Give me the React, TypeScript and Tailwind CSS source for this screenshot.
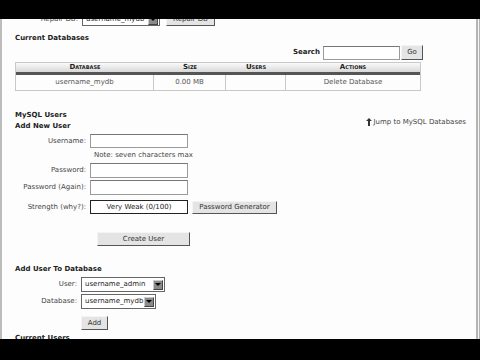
import React from "react";

const Btn = ({ children, className = "" }: { children: React.ReactNode; className?: string }) => (
  <div
    className={`flex items-center justify-center bg-[#e4e4e4] border border-t-[#f4f4f4] border-l-[#f4f4f4] border-b-[#555] border-r-[#555] text-[#333] ${className}`}
  >
    {children}
  </div>
);

const Input = ({ className = "" }: { className?: string }) => (
  <div className={`bg-white border border-[#9a9a9a] border-t-[#777] ${className}`} />
);

const Select = ({ value, className = "" }: { value: string; className?: string }) => (
  <div className={`flex items-center bg-white border border-[#666] p-px ${className}`}>
    <span className="flex-1 pl-[2px] text-[#222] whitespace-nowrap overflow-hidden">{value}</span>
    <span className="w-[10px] h-[10px] flex items-center justify-center bg-[#8a8a8a] border border-[#ccc] border-r-[#444] border-b-[#444]">
      <span className="w-0 h-0 border-l-[3px] border-r-[3px] border-t-[3px] border-l-transparent border-r-transparent border-t-black" />
    </span>
  </div>
);

const Row = ({ label, children, lw = "w-[88px]" }: { label: string; children: React.ReactNode; lw?: string }) => (
  <div className="flex items-center">
    <div className={`${lw} pr-[4px] text-right text-[#444]`}>{label}</div>
    {children}
  </div>
);

export default function App() {
  return (
    <div className="w-[480px] h-[360px] bg-black flex flex-col font-['DejaVu_Sans',sans-serif] text-[7px] leading-none">
      <div className="h-[19px] shrink-0" />
      <div className="h-[320px] shrink-0 bg-[#fdfdfd] border-l-2 border-[#bdbdbd] overflow-hidden flex">
        <div className="flex-1 flex flex-col">
          {/* repair row, cut off by the top bar */}
          <div className="flex items-center -mt-[6px] h-[14px]">
            <div className="w-[78px] pr-[2px] text-right text-[#444]">Repair DB:</div>
            <Select value="username_mydb" className="w-[78px] h-[13px] ml-[2px]" />
            <Btn className="w-[49px] h-[13px] ml-[6px]">Repair DB</Btn>
          </div>

          <div className="mt-[9px] ml-[13px] font-bold text-[#222]">Current Databases</div>

          <div className="flex items-center justify-end mr-[53px] mt-[3px] h-[16px]">
            <span className="font-bold text-[#222] mr-[3px]">Search</span>
            <Input className="w-[77px] h-[14px]" />
            <Btn className="w-[22px] h-[15px] ml-px">Go</Btn>
          </div>

          {/* table */}
          <div className="ml-[13px] w-[406px] mt-[2px] border border-[#c8c8c8]">
            <div className="grid grid-cols-[138px_72px_60px_1fr] h-[12px] bg-gradient-to-b from-[#fafafa] to-[#d8d8d8] border-b-[3px] border-[#555] font-bold text-[#222] [font-variant:small-caps]">
              <div className="flex items-end justify-center pb-px">Database</div>
              <div className="flex items-end justify-center pb-px">Size</div>
              <div className="flex items-end justify-center pb-px">Users</div>
              <div className="flex items-end justify-center pb-px">Actions</div>
            </div>
            <div className="grid grid-cols-[138px_72px_60px_1fr] h-[15px] text-[#555]">
              <div className="flex items-center justify-center border-r border-[#c8c8c8]">username_mydb</div>
              <div className="flex items-center justify-center border-r border-[#c8c8c8]">0.00 MB</div>
              <div className="flex items-center justify-center border-r border-[#c8c8c8]" />
              <div className="flex items-center justify-center">Delete Database</div>
            </div>
          </div>

          <div className="mt-[21px] ml-[13px] font-bold text-[#222]">MySQL Users</div>
          <div className="flex justify-end mr-[10px] -mt-[1px] items-center text-[#444]">
            <svg width="6" height="8" viewBox="0 0 6 8" className="mr-px">
              <path d="M3 0 L6 3 L4 3 L4 8 L2 8 L2 3 L0 3 Z" fill="#333" />
            </svg>
            Jump to MySQL Databases
          </div>
          <div className="-mt-[3px] ml-[13px] font-bold text-[#222]">Add New User</div>

          <div className="mt-[4px] flex flex-col">
            <Row label="Username:">
              <Input className="w-[98px] h-[14px]" />
            </Row>
            <div className="ml-[92px] mt-[4px] text-[#444]">Note: seven characters max</div>
            <div className="mt-[4px]">
              <Row label="Password:">
                <Input className="w-[98px] h-[15px]" />
              </Row>
            </div>
            <div className="mt-[2px]">
              <Row label="Password (Again):">
                <Input className="w-[98px] h-[15px]" />
              </Row>
            </div>
            <div className="mt-[5px]">
              <Row label="Strength (why?):">
                <div className="w-[98px] h-[14px] border border-[#222] bg-white flex items-center justify-center text-[#222]">
                  Very Weak (0/100)
                </div>
                <Btn className="w-[85px] h-[13px] ml-[4px]">Password Generator</Btn>
              </Row>
            </div>
            <Btn className="w-[93px] h-[14px] ml-[95px] mt-[18px]">Create User</Btn>
          </div>

          <div className="mt-[20px] ml-[13px] font-bold text-[#222]">Add User To Database</div>
          <div className="mt-[4px] flex flex-col gap-[2px]">
            <Row label="User:" lw="w-[79px]">
              <Select value="username_admin" className="w-[84px] h-[15px]" />
            </Row>
            <Row label="Database:" lw="w-[79px]">
              <Select value="username_mydb" className="w-[75px] h-[15px]" />
            </Row>
            <div className="ml-[79px] mt-[5px]">
              <Btn className="w-[27px] h-[14px]">Add</Btn>
            </div>
          </div>
          <div className="mt-[5px] ml-[13px] font-bold text-[#222]">Current Users</div>
        </div>
        <div className="w-[4px] shrink-0 border-l-2 border-r border-[#b5b5b5] bg-[#f4f4f4]" />
      </div>
      <div className="flex-1" />
    </div>
  );
}
